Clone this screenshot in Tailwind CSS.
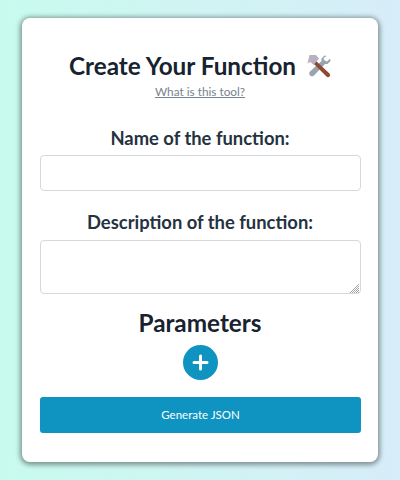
<!DOCTYPE html>
<html lang="en">
<head>
    <meta charset="UTF-8">
    <meta name="viewport" content="width=device-width, initial-scale=1.0">
    <title>Create Your Function</title>
    <script src="https://cdn.jsdelivr.net/npm/@tailwindcss/browser@4"></script>
</head>
<body class="h-[480px] overflow-hidden bg-gradient-to-r from-[#c8fbee] to-[#d7edf9] font-['Lato',sans-serif] text-[#1f2937]">
    <div class="pt-[18px] px-[22px]">
        <div class="h-[444px] w-[356px] bg-white rounded-lg px-[18px] pt-[32px] shadow-[0_1px_5px_2px_rgba(0,0,0,0.4)]">
            <h1 class="h-[32px] flex items-center justify-center text-[24.300px] leading-[32px] font-bold text-[#17232f]">
                <span>Create Your Function</span>
                <svg class="ml-[11px] w-[24px] h-[24px]" viewBox="0 0 24 24">
                    <path d="M17.500 1.500 L14.500 4.500 L14.500 7 L2.500 18 A3 3 0 0 0 6.500 22 L18 10 L20.500 10 L23.500 7 L23 4.500 L20 7.500 L17.500 6.500 L16.500 4 L19.500 2 Z" fill="#9aa3ae"/>
                    <path d="M8.500 6.500 L22.500 19.500 A1.900 1.900 0 0 1 19.500 22.500 L6 9 Z" fill="#8a4b32"/>
                    <path d="M2.500 1 L9 1 L12 4.500 L6.500 11 L3.500 8 L0.500 9.500 Z" fill="#b9b1c0"/>
                </svg>
            </h1>
            <a href="#" class="block mx-auto w-fit h-[20px] text-[11.800px] leading-[20px] text-[#77838f] underline">What is this tool?</a>
            <form class="mt-[20px]">
                <label class="block h-[32px] text-center text-[18.400px] leading-[32px] font-bold text-[#253341]">Name of the function:</label>
                <input type="text" class="mt-[1px] block w-[321px] h-[36px] border border-[#d5d9de] rounded bg-white">
                <label class="mt-[15px] block h-[32px] text-center text-[18.400px] leading-[32px] font-bold text-[#253341]">Description of the function:</label>
                <div class="relative mt-[2px] h-[54px]">
                    <textarea class="block w-[321px] h-[54px] border border-[#d5d9de] rounded bg-white resize-none"></textarea>
                    <svg class="absolute right-[1px] bottom-[1px] w-[9px] h-[9px]" viewBox="0 0 9 9">
                        <path d="M0 9 L9 0 M2 9 L9 2 M4 9 L9 4 M6 9 L9 6 M8 9 L9 8" stroke="#8b8f94" stroke-width="0.8"/>
                    </svg>
                </div>
                <h2 class="mt-[13px] h-[32px] text-center text-[24.300px] leading-[32px] font-bold text-[#17232f]">Parameters</h2>
                <button type="button" class="mx-auto mt-[6px] flex items-center justify-center w-[35px] h-[35px] rounded-full bg-[#0f94c2]">
                    <svg class="w-[17px] h-[17px]" viewBox="0 0 17 17">
                        <path d="M8.500 2 V15 M2 8.500 H15" stroke="#fff" stroke-width="3" stroke-linecap="round"/>
                    </svg>
                </button>
                <button type="button" class="mt-[17px] block w-[321px] h-[36px] rounded-[3px] bg-[#0f94c2] text-white text-[11.500px]">Generate JSON</button>
            </form>
        </div>
    </div>
</body>
</html>
